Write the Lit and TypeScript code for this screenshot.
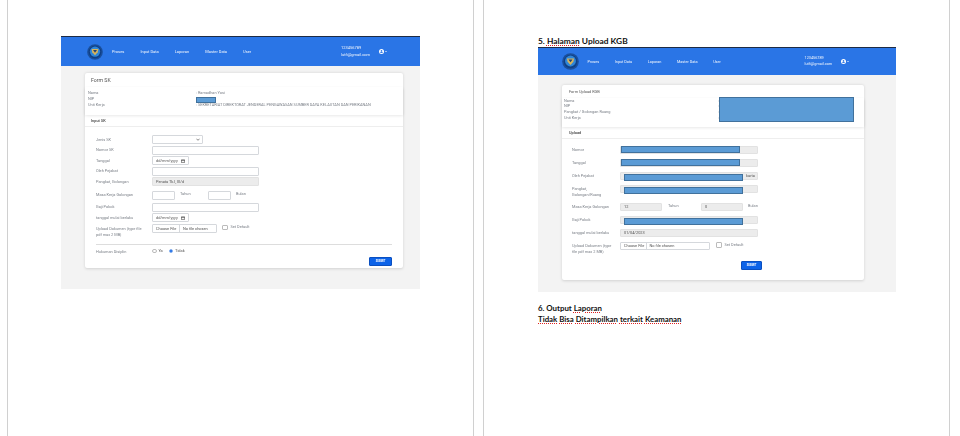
import { LitElement, html, css, svg } from "lit";
import { customElement, property } from "lit/decorators.js";

const logo = svg`<svg viewBox="0 0 20 20" width="100%" height="100%">
  <circle cx="10" cy="10" r="9.8" fill="#1a4f9c"/>
  <circle cx="10" cy="10" r="8" fill="#0f3f86"/>
  <circle cx="10" cy="9.4" r="6.4" fill="#2f86d8"/>
  <path d="M5.8 6.4 L14.2 6.4 L13.4 10.4 L10 14 L6.6 10.4 Z" fill="#d9b45a"/>
  <path d="M7.6 7.6 L12.4 7.6 L10 11 Z" fill="#25406e"/>
</svg>`;

const calendar = svg`<svg viewBox="0 0 10 10" width="4" height="4"><path d="M1 2h8v7H1z M1 4h8" fill="none" stroke="#333" stroke-width="1.4"/></svg>`;
const chevron = svg`<svg viewBox="0 0 10 6" width="4" height="3"><path d="M1 1l4 4 4-4" fill="none" stroke="#444" stroke-width="1.6"/></svg>`;
const userIcon = svg`<svg viewBox="0 0 10 10" width="5" height="5"><circle cx="5" cy="5" r="5" fill="#fff"/><circle cx="5" cy="3.8" r="1.7" fill="#2a75e6"/><path d="M1.8 8.2a3.4 3.4 0 0 1 6.4 0" fill="#2a75e6"/></svg>`;

@customElement("shot-nav")
class ShotNav extends LitElement {
  @property({ type: Boolean }) second = false;
  static styles = css`
    :host { display: block; }
    .nav { display: flex; align-items: center; background: #2a75e6; color: #f2f6fd; border-top: 1.5px solid #1d2b45; height: 30px; box-sizing: border-box; padding-left: 26px; font: 400 4px Roboto, sans-serif; filter: blur(0.25px); }
    .nav.b { height: 28px; padding-left: 24px; font-size: 3.8px; }
    .logo { width: 16px; height: 16px; flex: none; margin-right: 9px; }
    .b .logo { width: 17px; height: 17px; margin-right: 8.5px; }
    .menu { display: flex; gap: 16px; width: 229px; }
    .b .menu { gap: 15.5px; width: 217px; }
    .who { display: flex; flex-direction: column; gap: 2.6px; width: 38px; line-height: 4px; }
    .b .who { width: 36px; gap: 2.2px; }
    .acct { display: flex; align-items: center; gap: 1px; }
    .caret { width: 0; height: 0; border: 1px solid transparent; border-top-color: #fff; border-bottom: 0; }
  `;
  render() {
    return html`<div class="nav ${this.second ? "b" : ""}">
      <div class="logo">${logo}</div>
      <div class="menu"><span>Proses</span><span>Input Data</span><span>Laporan</span><span>Master Data</span><span>User</span></div>
      <div class="who"><span>123456789</span><span>lutfi@gmail.com</span></div>
      <div class="acct">${userIcon}<span class="caret"></span></div>
    </div>`;
  }
}

const shared = css`
  .row { display: grid; grid-template-columns: 56px 1fr; align-items: start; color: #7a7f87; font: 400 3.9px/6px Roboto, sans-serif; }
  .row > label { padding-top: 1.6px; }
  .fields { display: flex; align-items: flex-start; position: relative; }
  .f { box-sizing: border-box; height: 9px; border: 0.6px solid #d5d8dc; border-radius: 1px; background: #fff; color: #555; display: flex; align-items: center; padding: 0 3px; line-height: 1; flex: none; }
  .f.dis { background: #ececec; border-color: #e2e2e2; }
  .sep { padding-top: 0.6px; flex: none; }
  .choose { display: flex; padding: 0; }
  .choose span { padding: 0 3px; display: flex; align-items: center; box-sizing: border-box; height: 100%; white-space: nowrap; }
  .choose span:first-child { border-right: 0.6px solid #d5d8dc; flex: none; }
  .check { display: flex; align-items: center; gap: 3px; flex: none; height: 7px; }
  .box { width: 3.5px; height: 3.5px; border: 0.6px solid #bbb; border-radius: 1px; background: #fff; }
  .submit { background: #0d63e8; color: #fff; font: 700 2.6px Roboto, sans-serif; display: flex; align-items: center; justify-content: center; border-radius: 1px; border: 0.6px solid #0a4fc0; box-sizing: border-box; }
  .redact { position: absolute; background: #5b9bd5; border: 0.6px solid #41719c; box-sizing: border-box; }
  .card { background: #fff; border-radius: 2px; box-shadow: 0 0.5px 3px rgba(0,0,0,.14); }
  .title { color: #555; font-family: Roboto, sans-serif; }
  .band { position: relative; box-shadow: 0 0.5px 3px rgba(0,0,0,.12); color: #7a7f87; font: 400 3.9px/6px Roboto, sans-serif; }
  .band-row { display: grid; }
  .sub { color: #444; font: 500 3.9px Roboto, sans-serif; border-bottom: 0.6px solid #eee; box-sizing: border-box; display: flex; align-items: center; }
`;

@customElement("form-sk")
class FormSk extends LitElement {
  static styles = [shared, css`
    :host { display: block; background: #f3f3f3; width: 359px; height: 223px; box-sizing: border-box; padding: 7px 17px 0 24px; filter: blur(0.25px); }
    .card { height: 195px; }
    .title { height: 14px; box-sizing: border-box; padding-left: 6px; display: flex; align-items: center; font-size: 5.2px; }
    .band { height: 28px; padding: 3px 3px; box-sizing: border-box; }
    .band-row { grid-template-columns: 108px 1fr; }
    .r1 { left: 111px; top: 10px; width: 20px; height: 6px; }
    .sub { height: 12px; padding-left: 6px; }
    .form { padding: 8px 11px 0; }
    .row { height: 10.6px; }
    .m-a { margin-top: 2.8px; }
    .m-b { height: 12px; }
    .w-s { width: 51px; justify-content: flex-end; padding-right: 2px; height: 9px; }
    .w-l { width: 107px; }
    .w-d { width: 37px; justify-content: space-between; }
    .w-m { width: 23px; }
    .dis { width: 107px; }
    .t1 { margin: 0 0 0 5px; width: 28px; }
    .t2 { margin-left: 5px; }
    .choose { width: 65px; }
    .choose span:first-child { width: 27px; }
    .check { margin-left: 5px; }
    .two { height: 20px; }
    hr { border: 0; border-top: 0.6px solid #ddd; margin: 0; }
    .radio-row { margin-top: 2.4px; }
    .radios { display: flex; align-items: center; gap: 1.8px; height: 7px; color: #555; }
    .radio { width: 4.6px; height: 4.6px; border-radius: 50%; border: 0.6px solid #bbb; box-sizing: border-box; background: #fff; }
    .radio.on { border: 1px solid #8db4ee; background: #0d63e8; }
    .radios .gap { width: 2.4px; }
    .foot { display: flex; justify-content: flex-end; margin-top: -1px; }
    .submit { width: 23px; height: 9px; }
  `];
  render() {
    return html`<div class="card">
      <div class="title">Form SK</div>
      <div class="band">
        <div class="band-row"><span>Nama</span><span>: Ramadhan Yosi</span></div>
        <div class="band-row"><span>NIP</span><span>:</span></div>
        <div class="band-row"><span>Unit Kerja</span><span>: SEKRETARIAT DIREKTORAT JENDERAL PENGAWASAN SUMBER DAYA KELAUTAN DAN PERIKANAN</span></div>
        <div class="redact r1"></div>
      </div>
      <div class="sub">Input SK</div>
      <div class="form">
        <div class="row"><label>Jenis SK</label><div class="fields"><div class="f w-s">${chevron}</div></div></div>
        <div class="row"><label>Nomor SK</label><div class="fields"><div class="f w-l"></div></div></div>
        <div class="row"><label>Tanggal</label><div class="fields"><div class="f w-d">dd/mm/yyyy ${calendar}</div></div></div>
        <div class="row"><label>Oleh Pejabat</label><div class="fields"><div class="f w-l"></div></div></div>
        <div class="row"><label>Pangkat, Golongan</label><div class="fields"><div class="f dis">Penata Tk.I, III/d</div></div></div>
        <div class="row m-a m-b"><label>Masa Kerja Golongan</label><div class="fields"><div class="f w-m"></div><span class="sep t1">Tahun</span><div class="f w-m"></div><span class="sep t2">Bulan</span></div></div>
        <div class="row"><label>Gaji Pokok</label><div class="fields"><div class="f w-l"></div></div></div>
        <div class="row"><label>tanggal mulai berlaku</label><div class="fields"><div class="f w-d">dd/mm/yyyy ${calendar}</div></div></div>
        <div class="row two"><label>Upload Dokumen (type file<br />pdf max 2 MB)</label><div class="fields"><div class="f choose"><span>Choose File</span><span>No file chosen</span></div><div class="check"><span class="box"></span><span>Set Default</span></div></div></div>
        <hr />
        <div class="row radio-row"><label>Hukuman Disiplin</label><div class="radios"><span class="radio"></span><span>Ya</span><span class="gap"></span><span class="radio on"></span><span>Tidak</span></div></div>
        <div class="foot"><div class="submit">SUBMIT</div></div>
      </div>
    </div>`;
  }
}

@customElement("form-kgb")
class FormKgb extends LitElement {
  static styles = [shared, css`
    :host { display: block; background: #f3f3f3; width: 358px; height: 217px; box-sizing: border-box; padding: 10px 32px 0 24px; filter: blur(0.25px); }
    .card { height: 195px; }
    .title { height: 13px; box-sizing: border-box; padding-left: 7px; display: flex; align-items: center; font-size: 3.9px; }
    .band { height: 29px; padding: 0 2px; box-sizing: border-box; }
    .band-row { grid-template-columns: 154px 1fr; line-height: 5.8px; }
    .r2 { left: 157px; top: -1px; width: 135px; height: 25px; }
    .sub { height: 12px; padding-left: 7px; }
    .form { padding: 7px 0 0 10px; width: 300px; box-sizing: content-box; }
    .row { height: 13px; grid-template-columns: 48px 1fr; }
    .f { width: 138px; height: 8.5px; flex: none; }
    .f.end { justify-content: flex-end; padding-right: 2px; }
    .row.a { height: 18px; }
    .row.mk { height: 13px; }
    .f.m { width: 42px; }
    .t1 { margin-left: 6px; width: 33px; }
    .t2 { margin-left: 5px; }
    .choose { width: 90px; }
    .choose span:first-child { width: 25.6px; }
    .check { margin-left: 6px; }
    .two { height: 19px; }
    .r { height: 7px; left: 1px; width: 119px; top: 0.5px; }
    .r.s { left: 4px; top: 2px; }
    .foot { width: 142px; margin-left: 48px; display: flex; justify-content: flex-end; }
    .submit { width: 21px; height: 9px; }
  `];
  render() {
    const rows = ["Nama", "NIP", "Pangkat / Golongan Ruang", "Unit Kerja"];
    return html`<div class="card">
      <div class="title">Form Upload KGB</div>
      <div class="band">
        ${rows.map((r) => html`<div class="band-row"><span>${r}</span><span>:</span></div>`)}
        <div class="redact r2"></div>
      </div>
      <div class="sub">Upload</div>
      <div class="form">
        <div class="row"><label>Nomor</label><div class="fields"><div class="f dis"></div><div class="redact r"></div></div></div>
        <div class="row"><label>Tanggal</label><div class="fields"><div class="f dis"></div><div class="redact r"></div></div></div>
        <div class="row"><label>Oleh Pejabat</label><div class="fields"><div class="f dis end">karta</div><div class="redact r s"></div></div></div>
        <div class="row a"><label>Pangkat,<br />Golongan/Ruang</label><div class="fields"><div class="f dis"></div><div class="redact r s"></div></div></div>
        <div class="row mk"><label>Masa Kerja Golongan</label><div class="fields"><div class="f m dis">12</div><span class="sep t1">Tahun</span><div class="f m dis">0</div><span class="sep t2">Bulan</span></div></div>
        <div class="row"><label>Gaji Pokok</label><div class="fields"><div class="f dis"></div><div class="redact r s"></div></div></div>
        <div class="row"><label>tanggal mulai berlaku</label><div class="fields"><div class="f dis">01/04/2023</div></div></div>
        <div class="row two"><label>Upload Dokumen (type<br />file pdf max 2 MB)</label><div class="fields"><div class="f choose"><span>Choose File</span><span>No file chosen</span></div><div class="check"><span class="box"></span><span>Set Default</span></div></div></div>
        <div class="foot"><div class="submit">SUBMIT</div></div>
      </div>
    </div>`;
  }
}

@customElement("app-root")
class AppRoot extends LitElement {
  static styles = css`
    :host { display: block; width: 960px; height: 436px; overflow: hidden; background: #fff; }
    .desk { display: flex; height: 436px; padding-left: 7px; gap: 9px; background: #fff; }
    .page { width: 467px; box-sizing: border-box; border-left: 1px solid #d0d0d0; border-right: 1px solid #d0d0d0; background: #fff; flex: none; }
    .p1 { padding: 36px 0 0 53px; }
    .p2 { padding: 36px 0 0 54px; }
    .shot { width: 359px; }
    .p2 .shot { width: 358px; }
    .doc { margin: 0; font: 700 8.4px/11.6px Lato, sans-serif; color: #111; height: 10.5px; }
    .after { margin-top: 11px; height: auto; font-size: 7.85px; }
    .after div { white-space: nowrap; }
    .sq { text-decoration: underline dotted #d22 0.7px; text-underline-offset: 1px; }
  `;
  render() {
    return html`<div class="desk">
      <section class="page p1">
        <div class="shot">
          <shot-nav></shot-nav>
          <form-sk></form-sk>
        </div>
      </section>
      <section class="page p2">
        <p class="doc">5. <span class="sq">Halaman</span> Upload KGB</p>
        <div class="shot">
          <shot-nav second></shot-nav>
          <form-kgb></form-kgb>
        </div>
        <div class="doc after">
          <div>6. Output <span class="sq">Laporan</span></div>
          <div><span class="sq">Tidak</span> <span class="sq">Bisa</span> <span class="sq">Ditampilkan</span> <span class="sq">terkait</span> <span class="sq">Keamanan</span></div>
        </div>
      </section>
    </div>`;
  }
}
